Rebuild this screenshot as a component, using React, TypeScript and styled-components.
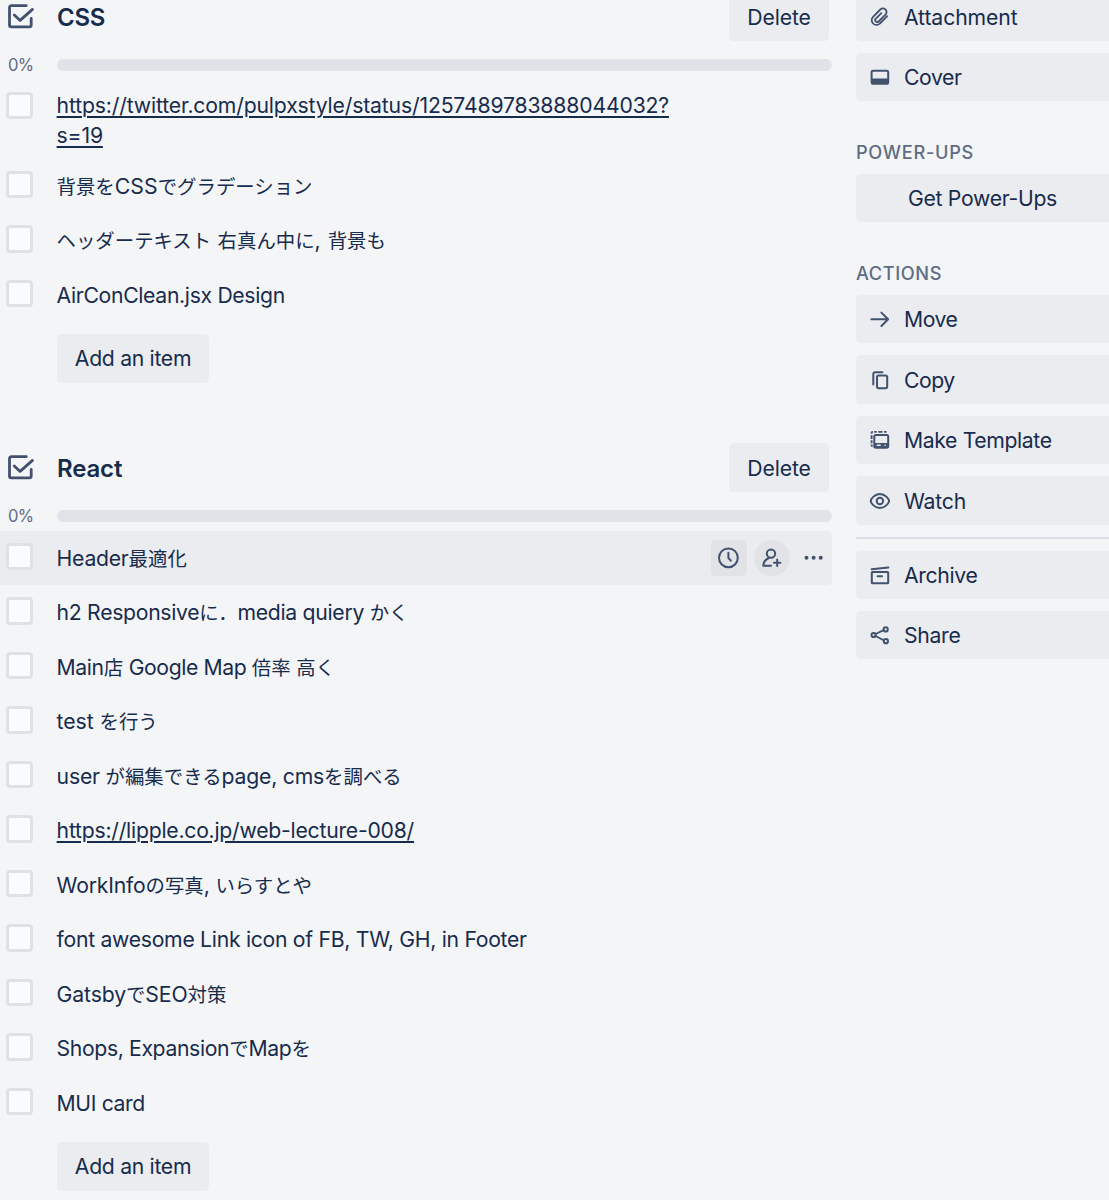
import React from "react";
import styled, { createGlobalStyle } from "styled-components";

const GlobalStyle = createGlobalStyle`
  * { box-sizing: border-box; }
  body { margin: 0; background: #f4f5f7; color: #172b4d; font-family: Inter, "Noto Sans CJK JP", sans-serif; font-size: 21.2px; line-height: 30px; }
`;

const Page = styled.div`
  display: flex; gap: 24px; width: 1109px; height: 1200px; overflow: hidden;
`;
const Main = styled.main`
  width: 832px; flex: none; display: flex; flex-direction: column; gap: 60.7px; margin-top: -7.5px;
`;
const Header = styled.header`
  display: flex; align-items: center; height: 48.5px; padding: 0 3px 0 7px;
`;
const Title = styled.h3<{ $ls?: number }>`
  flex: 1; margin: 0 0 0 22px; padding-top: 2px; font-size: 24px; font-weight: 600; letter-spacing: ${(p) => p.$ls ?? 0}px;
`;
const Button = styled.button<{ $ls?: number; $width: number }>`
  width: ${(p) => p.$width}px; height: 48.3px; padding: 0; border: 0; border-radius: 4.5px; background: #eaecef;
  color: inherit; font: inherit; letter-spacing: ${(p) => p.$ls ?? 0}px; white-space: nowrap;
`;
const Progress = styled.div`
  display: flex; align-items: center; height: 12px; margin: 18px 0 9px; padding-left: 8px;
`;
const Percent = styled.span`
  width: 49.2px; font-size: 16.6px; color: #5e6c84; letter-spacing: -0.8px;
`;
const Track = styled.div`
  flex: 1; height: 12px; border-radius: 6px; background: #e1e3e8;
`;
const Row = styled.div<{ $active?: boolean; $tall?: boolean }>`
  display: flex; align-items: flex-start; height: ${(p) => (p.$tall ? 78.8 : 54.5)}px;
  padding: 12px 0 0 6px; border-radius: 0 4.5px 4.5px 0; background: ${(p) => (p.$active ? "#eaecef" : "transparent")};
`;
const Box = styled.span`
  flex: none; width: 27.3px; height: 27.3px; border: 3px solid #dfe1e5; border-radius: 4px; background: #fafbfc;
`;
const Label = styled.span<{ $link?: boolean; $tall?: boolean; $ls?: number }>`
  flex: 1; margin: ${(p) => (p.$tall ? -2.5 : -0.1)}px 0 0 23.3px; white-space: pre; letter-spacing: ${(p) => p.$ls ?? 0}px;
  text-decoration: ${(p) => (p.$link ? "underline" : "none")};
  text-decoration-thickness: 1.5px; text-underline-offset: 2.5px;
`;
const Cjk = styled.span`
  font-family: "Noto Sans CJK JP", sans-serif; font-size: 19.4px; letter-spacing: 0; line-height: 1;
`;
const Tools = styled.div`
  display: flex; gap: 6.4px; margin: -2.7px -0.8px 0 0;
`;
const Tool = styled.span<{ $shape: "square" | "round" | "plain" }>`
  display: grid; place-items: center; width: 36.3px; height: 36.3px;
  border-radius: ${(p) => (p.$shape === "round" ? "50%" : "4.5px")};
  background: ${(p) => (p.$shape === "plain" ? "transparent" : "#e1e3e7")};
`;
const Add = styled.div`
  padding: 12px 0 0 57px;
`;
const Side = styled.aside`
  flex: 1; display: flex; flex-direction: column; margin-top: -7.5px;
`;
const Stack = styled.div`
  display: flex; flex-direction: column; gap: 12.2px;
`;
const Action = styled.div<{ $center?: boolean; $ls?: number }>`
  display: flex; align-items: center; gap: 12px; width: 260px; height: 48.3px; padding-left: ${(p) => (p.$center ? 52 : 12)}px;
  border-radius: 4.5px; background: #eaecef; letter-spacing: ${(p) => p.$ls ?? 0}px; white-space: nowrap;
`;
const Group = styled.h4<{ $ls?: number }>`
  margin: 35.7px 0 6px; height: 31px; line-height: 31px; font-size: 18.2px; font-weight: 500; color: #5e6c84;
  letter-spacing: ${(p) => p.$ls ?? 0}px;
`;
const Rule = styled.hr`
  width: 100%; height: 2px; margin: 12px 0; border: 0; background: #dcdfe7;
`;
const Svg = styled.svg`
  display: block; flex: none; fill: none; stroke: #42526e; stroke-width: 2; stroke-linecap: round; stroke-linejoin: round;
`;

const Icon = ({ children, size = 24 }: { children: React.ReactNode; size?: number }) => (
  <Svg width={size} height={size} viewBox={`0 0 ${size} ${size}`}>{children}</Svg>
);
const CheckIcon = () => (
  <Icon size={28}>
    <path strokeWidth="2.8" d="M19.3 2.6H4.4a1.9 1.9 0 0 0-1.9 1.9v17.400a1.9 1.9 0 0 0 1.900 1.900h17.900a1.900 1.900 0 0 0 1.900-1.900v-6.500M7.300 12l5.800 5.400L25.500 6.400" />
  </Icon>
);
const icons: Record<string, React.ReactNode> = {
  Attachment: <path strokeWidth="1.8" d="M19.2 11.2l-7.3 7.3a4.7 4.7 0 0 1-6.8 0 4.7 4.7 0 0 1 0-6.7l7.2-7.3a3.6 3.6 0 0 1 5.2 0 3.6 3.6 0 0 1 0 5.1l-6.9 6.9a2 2 0 0 1-2.8-2.9l5.6-5.5" />,
  Cover: (
    <>
      <rect x="3.6" y="5.8" width="16.6" height="12.800" rx="1.4" />
      <path fill="#42526e" stroke="none" d="M3 13.400h18V18a1.600 1.600 0 0 1-1.600 1.600H4.600A1.600 1.600 0 0 1 3 18z" />
    </>
  ),
  Move: <path d="M3.4 12.3H20M13.4 5.6l6.7 6.700-6.700 6.700" />,
  Copy: (
    <>
      <rect x="9" y="7.4" width="10.2" height="12.8" rx="1.6" />
      <path d="M14.4 4.3H7a1.7 1.7 0 0 0-1.7 1.7v10.5" />
    </>
  ),
  "Make Template": (
    <>
      <rect x="6.3" y="6.9" width="13.9" height="12.8" rx="1.6" />
      <path fill="#42526e" stroke="none" d="M6 15h14.5v5H6z" />
      <path stroke="#eaecef" strokeWidth="1.5" d="M9.2 17.3h3M17 17.3h.1" />
      <path strokeWidth="1.9" strokeLinecap="butt" d="M18.6 3.900h-2.500M14.500 3.900h-4.200M8.700 3.900H6.200M4.900 3.900H4.600a1 1 0 0 0-1 1v.9M3.600 7.300v3.700M3.600 12.300v3M3.600 16.500v.9a1 1 0 0 0 1 .8" />
    </>
  ),
  Watch: (
    <>
      <path d="M2.7 12c0-1.6 3.6-7.1 9.2-7.1s9.2 5.5 9.2 7.1-3.6 7.1-9.2 7.1S2.7 13.6 2.7 12z" />
      <circle cx="11.9" cy="12" r="3.2" />
    </>
  ),
  Archive: (
    <>
      <rect x="3.8" y="9" width="16.4" height="11.3" rx=".6" />
      <path d="M3.7 6.2l16.6-1.7M9.6 13.3h4.4" />
    </>
  ),
  Share: (
    <>
      <path strokeWidth="1.800" d="M7.6 11l8-3.900M7.600 13l8 4.300" />
      <circle cx="5.6" cy="12" r="2.1" />
      <circle cx="17.7" cy="6.4" r="2.1" />
      <circle cx="17.9" cy="18.2" r="2.1" />
    </>
  ),
};

const ActionButton = ({ name, ls }: { name: string; ls?: number }) => (
  <Action $ls={ls}><Icon>{icons[name]}</Icon>{name}</Action>
);

const mixed = (text: string) =>
  text.split(/([\u3000-\u30ff\u4e00-\u9fff\uff00-\uffef]+)/).map((part, i) => (i % 2 ? <Cjk key={i}>{part}</Cjk> : part));

type Item = { text: string; link?: boolean; tall?: boolean; active?: boolean; ls?: number };

const ItemTools = () => (
  <Tools>
    <Tool $shape="square">
      <Icon><circle cx="11.4" cy="11.8" r="9.4" /><path d="M11.4 6.800v5.200l2.400 2.700" /></Icon>
    </Tool>
    <Tool $shape="round">
      <Icon><circle cx="11" cy="7.600" r="4.200" /><path d="M8.800 12C5.500 13.400 3.500 16.300 3.200 19.800h7.800M17.200 13.600v6.400M14 16.800h6.400" /></Icon>
    </Tool>
    <Tool $shape="plain">
      <Icon><g fill="#42526e" stroke="none"><circle cx="3.5" cy="11.800" r="2" /><circle cx="10.600" cy="11.800" r="2" /><circle cx="17.700" cy="11.800" r="2" /></g></Icon>
    </Tool>
  </Tools>
);

const Checklist = ({ title, ls, items }: { title: string; ls?: number; items: Item[] }) => (
  <section>
    <Header><CheckIcon /><Title $ls={ls}>{title}</Title><Button $width={100} $ls={-0.1}>Delete</Button></Header>
    <Progress><Percent>0%</Percent><Track /></Progress>
    {items.map((it) => (
      <Row key={it.text} $active={it.active} $tall={it.tall}>
        <Box />
        <Label $link={it.link} $tall={it.tall} $ls={it.ls}>{mixed(it.text)}</Label>
        {it.active && <ItemTools />}
      </Row>
    ))}
    <Add><Button $width={152} $ls={-0.3}>Add an item</Button></Add>
  </section>
);

const cssItems: Item[] = [
  { text: "https://twitter.com/pulpxstyle/status/1257489783888044032?\ns=19", link: true, tall: true, ls: -0.165 },
  { text: "背景をCSSでグラデーション", ls: 0.1 },
  { text: "ヘッダーテキスト 右真ん中に, 背景も", ls: 0.5 },
  { text: "AirConClean.jsx Design", ls: -0.33 },
];
const reactItems: Item[] = [
  { text: "Header最適化", active: true, ls: -0.25 },
  { text: "h2 Responsiveに．media quiery かく", ls: -0.3 },
  { text: "Main店 Google Map 倍率 高く", ls: -0.4 },
  { text: "test を行う", ls: -0.05 },
  { text: "user が編集できるpage, cmsを調べる", ls: -0.2 },
  { text: "https://lipple.co.jp/web-lecture-008/", link: true, ls: -0.235 },
  { text: "WorkInfoの写真, いらすとや", ls: -0.2 },
  { text: "font awesome Link icon of FB, TW, GH, in Footer", ls: -0.29 },
  { text: "GatsbyでSEO対策", ls: -0.12 },
  { text: "Shops, ExpansionでMapを", ls: -0.37 },
  { text: "MUI card", ls: -0.38 },
];

export default function App() {
  return (
    <>
      <GlobalStyle />
      <Page>
        <Main>
          <Checklist title="CSS" ls={-0.3} items={cssItems} />
          <Checklist title="React" ls={-0.15} items={reactItems} />
        </Main>
        <Side>
          <Stack>
            <ActionButton name="Attachment" ls={-0.1} />
            <ActionButton name="Cover" ls={-0.4} />
          </Stack>
          <Group $ls={0.7}>POWER-UPS</Group>
          <Action $center $ls={-0.3}>Get Power-Ups</Action>
          <Group $ls={0.6}>ACTIONS</Group>
          <Stack>
            <ActionButton name="Move" ls={-0.5} />
            <ActionButton name="Copy" ls={-0.5} />
            <ActionButton name="Make Template" ls={-0.37} />
            <ActionButton name="Watch" ls={-0.2} />
          </Stack>
          <Rule />
          <Stack>
            <ActionButton name="Archive" ls={-0.33} />
            <ActionButton name="Share" ls={-0.3} />
          </Stack>
        </Side>
      </Page>
    </>
  );
}
